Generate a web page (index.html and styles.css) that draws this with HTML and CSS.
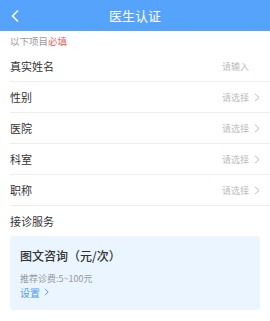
FILE: index.html
```html
<!DOCTYPE html>
<html lang="zh-CN">
<head>
  <meta charset="UTF-8" />
  <meta name="viewport" content="width=device-width, initial-scale=1" />
  <title>医生认证</title>
  <link rel="stylesheet" href="styles.css">
</head>
<body>
  <header class="nav-bar">
    <button class="back-btn" aria-label="返回">
      <svg width="8" height="12" viewBox="0 0 8 12"><path d="M6.5 1 L1.5 6 L6.5 11" fill="none" stroke="#fff" stroke-width="1.6" stroke-linecap="round" stroke-linejoin="round"/></svg>
    </button>
    <h1 class="nav-title">医生认证</h1>
    <span></span>
  </header>

  <div class="tip">以下项目<span class="required">必填</span></div>

  <ul class="form-list">
    <li class="form-row">
      <span class="row-label">真实姓名</span>
      <span class="row-value">请输入<svg class="arrow hidden" width="6" height="9" viewBox="0 0 6 9"><path d="M1 0.8 L5 4.5 L1 8.2" fill="none" stroke="#bbb" stroke-width="1"/></svg></span>
    </li>
    <li class="form-row">
      <span class="row-label">性别</span>
      <span class="row-value">请选择<svg class="arrow" width="6" height="9" viewBox="0 0 6 9"><path d="M1 0.8 L5 4.5 L1 8.2" fill="none" stroke="#bbb" stroke-width="1"/></svg></span>
    </li>
    <li class="form-row">
      <span class="row-label">医院</span>
      <span class="row-value">请选择<svg class="arrow" width="6" height="9" viewBox="0 0 6 9"><path d="M1 0.8 L5 4.5 L1 8.2" fill="none" stroke="#bbb" stroke-width="1"/></svg></span>
    </li>
    <li class="form-row">
      <span class="row-label">科室</span>
      <span class="row-value">请选择<svg class="arrow" width="6" height="9" viewBox="0 0 6 9"><path d="M1 0.8 L5 4.5 L1 8.2" fill="none" stroke="#bbb" stroke-width="1"/></svg></span>
    </li>
    <li class="form-row">
      <span class="row-label">职称</span>
      <span class="row-value">请选择<svg class="arrow" width="6" height="9" viewBox="0 0 6 9"><path d="M1 0.8 L5 4.5 L1 8.2" fill="none" stroke="#bbb" stroke-width="1"/></svg></span>
    </li>
  </ul>

  <div class="section-title">接诊服务</div>

  <div class="service-card">
    <div class="service-name">图文咨询（元/次）</div>
    <div class="service-fee">推荐诊费:5~100元</div>
    <a class="service-link" href="#">设置<svg class="arrow" width="5" height="8" viewBox="0 0 5 8"><path d="M1 0.8 L4.2 4 L1 7.2" fill="none" stroke="#4a9cf5" stroke-width="1"/></svg></a>
  </div>
</body>
</html>
```

FILE: styles.css
```css
body {
  margin: 0;
  background: #fff;
  font-family: "Noto Sans CJK SC", "Noto Sans", sans-serif;
  color: #333;
}
.nav-bar {
  height: 31px;
  background: #56a3fc;
  display: grid;
  grid-template-columns: 36px 1fr 36px;
  align-items: center;
}
.back-btn {
  background: transparent;
  border: none;
  padding: 0 0 0 11px;
  height: 31px;
  display: flex;
  align-items: center;
  cursor: pointer;
}
.nav-title {
  margin: 0;
  text-align: center;
  color: #fff;
  font-size: 13px;
  font-weight: normal;
  line-height: 31px;
}
.tip {
  height: 20px;
  line-height: 20px;
  padding-left: 10px;
  font-size: 9.5px;
  color: #999;
}
.tip .required {
  color: #f0605a;
}
.form-list {
  list-style: none;
  margin: 0;
  padding: 0 0 0 10px;
}
.form-row {
  height: 30px;
  border-bottom: 1px solid #eee;
  display: flex;
  justify-content: space-between;
  align-items: center;
  padding-right: 10px;
}
.row-label {
  font-size: 11px;
  color: #333;
}
.row-value {
  font-size: 9px;
  color: #bbb;
  display: flex;
  align-items: center;
}
.arrow {
  display: block;
  margin-left: 5px;
}
.arrow.hidden {
  visibility: hidden;
}
.section-title {
  height: 30px;
  line-height: 30px;
  padding-left: 10px;
  font-size: 11px;
  color: #333;
}
.service-card {
  margin: 0 10px;
  background: #ebf5ff;
  border-radius: 4px;
  padding: 12px 10px 11px;
}
.service-name {
  font-size: 12px;
  line-height: 16px;
  font-weight: 500;
  color: #333;
}
.service-fee {
  margin-top: 8px;
  font-size: 9px;
  line-height: 13px;
  color: #999;
}
.service-link {
  display: flex;
  align-items: center;
  height: 14px;
  font-size: 10px;
  color: #4a9cf5;
  text-decoration: none;
}
.service-link .arrow {
  margin-left: 4px;
}
```
